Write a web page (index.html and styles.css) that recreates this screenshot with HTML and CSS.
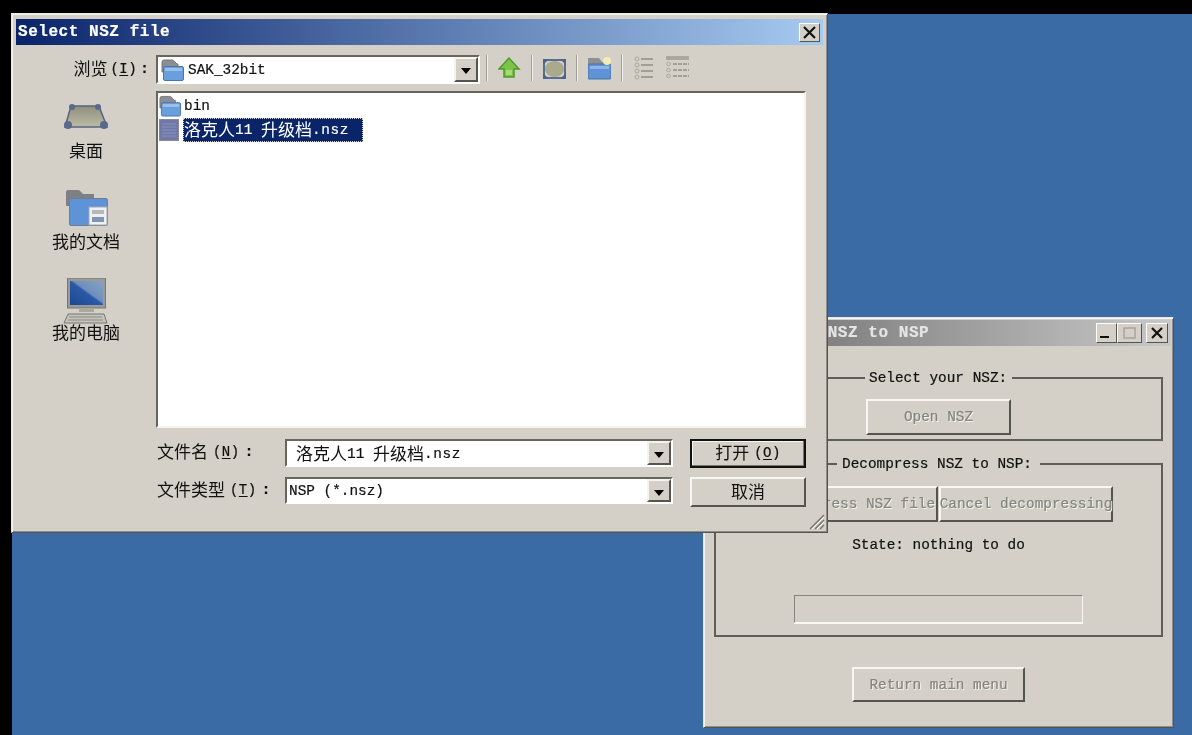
FILE: index.html
```html
<!DOCTYPE html>
<html lang="zh">
<head>
<meta charset="utf-8">
<title>Select NSZ file</title>
<link rel="stylesheet" href="styles.css">
</head>
<body>
<div class="screen">

  <section class="window app">
    <header class="titlebar inactive">
      <span class="app-title">Decompress NSZ to NSP</span>
      <div class="controls">
        <span class="ctl"><svg width="21" height="20" viewBox="0 0 21 20"><rect x="4" y="13" width="9" height="2" fill="#111"/></svg></span>
        <span class="ctl ctl-max"><svg width="25" height="20" viewBox="0 0 25 20"><rect x="7" y="5" width="11" height="10" fill="none" stroke="#a6a49c" stroke-width="1.5"/></svg></span>
        <span class="ctl ctl-close"><svg width="22" height="20" viewBox="0 0 22 20"><path d="M6 5l10 10M16 5L6 15" stroke="#111" stroke-width="2.2" fill="none"/></svg></span>
      </div>
    </header>
    <div class="app-body">
      <fieldset class="group group-open">
        <legend>Select your NSZ:</legend>
        <div class="btn-row"><button class="btn off open-btn" disabled>Open NSZ</button></div>
      </fieldset>
      <fieldset class="group group-dec">
        <legend>Decompress NSZ to NSP:</legend>
        <div class="btn-row">
          <button class="btn off dec-btn first" disabled>Decompress NSZ file</button>
          <button class="btn off dec-btn" disabled>Cancel decompressing</button>
        </div>
        <p class="state">State: nothing to do</p>
        <div class="progress"></div>
      </fieldset>
      <div class="btn-row return-row"><button class="btn off return-btn" disabled>Return main menu</button></div>
    </div>
  </section>

  <section class="window dialog">
    <header class="titlebar">
      <span class="dlg-title">Select NSZ file</span>
      <span class="ctl ctl-dlg"><svg width="21" height="19" viewBox="0 0 21 19"><path d="M5 4l11 11M16 4L5 15" stroke="#111" stroke-width="2.2" fill="none"/></svg></span>
    </header>
    <div class="dlg-grid">
      <div class="lookin-label"><span class="cn">浏览</span><span class="hot">(<u>I</u>)</span><b class="colon">:</b></div>
      <div class="toolbar">
        <div class="field combo look-combo">
          <svg class="folder-sm" width="24" height="22" viewBox="0 0 24 22"><use href="#folder"/></svg>
          <span class="mono">SAK_32bit</span>
          <span class="drop"></span>
        </div>
        <i class="sep"></i>
        <svg width="23" height="26" viewBox="0 0 23 26"><path d="M11 3L1 14h5v8h10v-8h5z" fill="#7dc24b" stroke="#4c9a2a" stroke-width="1.5"/><path d="M8 15v5h6v-5" fill="#a4dc74"/></svg>
        <i class="sep"></i>
        <svg width="23" height="26" viewBox="0 0 23 26"><rect x="0" y="4" width="23" height="20" fill="#5a6d92"/><rect x="2" y="6" width="19" height="16" fill="#d4d0c8"/><ellipse cx="11.500" cy="14" rx="9.500" ry="8" fill="#aaa98c"/><path d="M0 4h6L0 10zM23 4h-6l6 6zM0 24h6l-6-6zM23 24h-6l6-6z" fill="#4f6288"/></svg>
        <i class="sep"></i>
        <svg width="23" height="26" viewBox="0 0 23 26"><path d="M0 3h11l3 4h8v17H0z" fill="#8f9092"/><rect x="0" y="9" width="23" height="15" rx="1" fill="#5f92d6" stroke="#49719f"/><rect x="2" y="11" width="19" height="3" fill="#8db5e6"/><circle cx="19" cy="6" r="4" fill="#f2edb0"/></svg>
        <i class="sep"></i>
        <svg class="list-ic" width="23" height="26" viewBox="0 0 23 26"><g fill="none" stroke="#a9a79e"><circle cx="4" cy="4" r="2"/><circle cx="4" cy="10" r="2"/><circle cx="4" cy="16" r="2"/><circle cx="4" cy="22" r="2"/></g><path d="M8 4h12M8 10h12M8 16h12M8 22h12" stroke="#8f8d84" stroke-width="1.500"/></svg>
        <svg class="list-ic" width="23" height="26" viewBox="0 0 23 26"><rect x="0" y="1" width="23" height="4" fill="#a9a79e"/><g fill="none" stroke="#a9a79e"><circle cx="2.500" cy="9" r="1.800"/><circle cx="2.500" cy="15" r="1.800"/><circle cx="2.500" cy="21" r="1.800"/></g><path d="M7 9h16M7 15h16M7 21h16" stroke="#8f8d84" stroke-width="1.500" stroke-dasharray="4 1"/></svg>
      </div>

      <nav class="places">
        <div class="place">
          <svg width="46" height="46" viewBox="0 0 46 46"><defs><linearGradient id="desk" x1="0" y1="0" x2="0" y2="1"><stop offset="0" stop-color="#8f8f7c"/><stop offset="1" stop-color="#bdbba4"/></linearGradient></defs><path d="M8 10h28l8 21H2z" fill="url(#desk)" stroke="#55647f" stroke-width="1.500"/><circle cx="9" cy="11" r="3" fill="#58698c"/><circle cx="35" cy="11" r="3" fill="#58698c"/><circle cx="5" cy="29" r="4" fill="#58698c"/><circle cx="41" cy="29" r="4" fill="#58698c"/></svg>
          <span class="cn">桌面</span>
        </div>
        <div class="place">
          <svg width="46" height="46" viewBox="0 0 46 46"><path d="M3 5q0-2 2-2h10q2 0 3 2l2 2h11v12H3z" fill="#7e8083"/><rect x="6.500" y="11.500" width="38" height="27" rx="1.500" fill="#5e93d8" stroke="#6f7f92"/><rect x="26" y="20" width="18" height="18" fill="#eef0f2" stroke="#a4a8ad"/><rect x="29" y="23" width="12" height="4" fill="#b5b7ba"/><rect x="29" y="30" width="12" height="5" fill="#7f95b0"/></svg>
          <span class="cn">我的文档</span>
        </div>
        <div class="place">
          <svg width="46" height="46" viewBox="0 0 46 46"><defs><linearGradient id="scr" x1="0" y1="1" x2="1" y2="0"><stop offset="0" stop-color="#1d4690"/><stop offset=".5" stop-color="#2c5aa8"/><stop offset=".55" stop-color="#6d8fbd"/><stop offset="1" stop-color="#8aa0bf"/></linearGradient></defs><rect x="4.500" y="0" width="38" height="30" fill="#9a9a96" stroke="#777"/><rect x="7" y="3" width="33" height="24" fill="url(#scr)"/><rect x="16" y="30" width="15" height="4" fill="#a9a9a2"/><path d="M5 36h36l3 9H1z" fill="#c4c4bc" stroke="#77776f"/><path d="M6 39h33M5 42h35" stroke="#8c8c84"/></svg>
          <span class="cn">我的电脑</span>
        </div>
      </nav>

      <div class="filelist">
        <div class="row">
          <svg width="23" height="22" viewBox="0 0 24 22"><use href="#folder"/></svg>
          <span class="mono name-bin">bin</span>
        </div>
        <div class="row">
          <svg class="file-ic" width="20" height="22" viewBox="0 0 20 22"><rect x=".5" y=".5" width="19" height="21" fill="#6f78a8" stroke="#8a8a90"/><path d="M3 5h14M3 8h14M3 11h14M3 14h14M3 17h14" stroke="#8b92ba"/></svg>
          <span class="selected"><span class="cn">洛克人</span><span class="mono">11 </span><span class="cn">升级档</span><span class="mono ext">.nsz</span></span>
        </div>
      </div>

      <div class="bottom">
        <label class="bot-label"><span class="cn">文件名</span><span class="hot">(<u>N</u>)</span><b class="colon">:</b></label>
        <div class="field combo name-field">
          <span class="cn">洛克人</span><span class="mono">11 </span><span class="cn">升级档</span><span class="mono ext">.nsz</span>
          <span class="drop"></span>
        </div>
        <button class="btn default"><span class="cn">打开</span><span class="hot">(<u>O</u>)</span></button>
        <label class="bot-label"><span class="cn">文件类型</span><span class="hot">(<u>T</u>)</span><b class="colon">:</b></label>
        <div class="field combo type-field">
          <span class="mono">NSP (*.nsz)</span>
          <span class="drop"></span>
        </div>
        <button class="btn cancel-dlg"><span class="cn">取消</span></button>
      </div>
    </div>
    <svg class="grip" width="18" height="18" viewBox="0 0 18 18"><path d="M17 3L3 17M17 8l-9 9M17 13l-4 4" stroke="#77776f" stroke-width="1.500"/><path d="M17 5L5 17M17 10l-7 7" stroke="#fff"/></svg>
  </section>

  <svg class="defs" width="0" height="0"><defs>
    <g id="folder"><path d="M1 3q0-2 2-2h8q2 0 3 2l2 2h1v8H1z" fill="#8c8e92" stroke="#77797c"/><rect x="2.500" y="7.500" width="20" height="14" rx="1.500" fill="#6a9edd" stroke="#4d76a8"/><rect x="4" y="9" width="17" height="3" fill="#9cc0ea"/></g>
  </defs></svg>
</div>
</body>
</html>
```

FILE: styles.css
```css
* { box-sizing: border-box; }
html, body { margin: 0; height: 100%; background: #000; overflow: hidden; }
body { font: 14.4px "Liberation Mono", "Noto Sans CJK SC", monospace; color: #111; -webkit-text-stroke: 0.2px currentColor; }

.screen {
  position: relative;
  margin: 14px 0 0 12px;
  height: 721px;
  background: #3a6ba5;
  filter: blur(0.5px);
}
.defs { position: absolute; }

.cn { display: block; flex: none; padding-bottom: 4px; font: 17px/19px "Noto Sans CJK SC", sans-serif; white-space: nowrap; -webkit-text-stroke: 0; }
.mono { font: 14.4px/19px "Liberation Mono", monospace; }
.ext { letter-spacing: 0.6px; }
.hot { flex: none; margin-left: 5px; font: 14px/19px "Liberation Mono", monospace; letter-spacing: 0.4px; }
.colon { flex: none; margin-left: 5px; font: bold 15px/19px "Liberation Mono", monospace; }
u { text-underline-offset: 2px; }

.window {
  position: absolute;
  background: #d4d0c8;
  border: 1px solid;
  border-color: #e9e7e0 #55554f #55554f #e9e7e0;
  box-shadow: inset 1px 1px 0 #f4f3ee, inset -1px -1px 0 #8f8d86;
}
.dialog { left: -1px; top: -1px; width: 817px; height: 520px; padding: 5px 4px; }
.app { left: 691px; top: 303px; width: 471px; height: 411px; padding: 2px; }

.titlebar {
  display: flex;
  align-items: center;
  justify-content: space-between;
  height: 26px;
  color: #fff;
  font: bold 16px/26px "Liberation Mono", monospace;
  letter-spacing: 0.55px;
  background: linear-gradient(90deg, #0a246a, #a6caf0);
}
.dlg-title { padding-left: 2px; }
.inactive { background: linear-gradient(90deg, #6f6f6f 0%, #808080 25%, #c8c8c8 100%); color: #e4e4e4; }
.app-title { padding-left: 10px; }

.ctl {
  display: flex;
  width: 21px;
  height: 20px;
  background: #d4d0c8;
  border: 1px solid;
  border-color: #fff #55554f #55554f #fff;
}
.ctl svg { margin: -1px; flex: none; }
.controls { display: flex; padding-right: 3px; }
.ctl-max { width: 25px; margin-right: 4px; }
.ctl-close { width: 22px; }
.ctl-dlg { margin-right: 3px; height: 19px; }

.dlg-grid {
  display: grid;
  grid-template-columns: 140px 650px;
  grid-template-rows: 30px 337px auto;
  row-gap: 6px;
  margin-top: 10px;
}
.lookin-label {
  display: flex;
  justify-content: flex-end;
  align-items: center;
  height: 29px;
  padding-right: 7px;
}
.lookin-label .hot { margin-left: 3px; }
.lookin-label .colon { margin-left: 3px; }

.toolbar { display: flex; align-items: flex-start; gap: 10px; }
.toolbar .look-combo { margin-right: -4px; }
.sep { width: 2px; height: 26px; background: #a09e96; border-right: 1px solid #f2f1ec; }

.field {
  position: relative;
  display: flex;
  align-items: center;
  background: #fff;
  border: 2px solid;
  border-color: #66665f #fff #fff #66665f;
  white-space: pre;
}
.field .mono { padding-top: 2px; }
.combo { padding-right: 26px; }
.look-combo { width: 324px; height: 29px; padding-left: 3px; gap: 3px; }
.drop {
  position: absolute;
  right: 0;
  top: 0;
  bottom: 0;
  width: 24px;
  background: #d4d0c8;
  border: 2px solid;
  border-color: #f4f3ee #55554f #55554f #f4f3ee;
}
.drop::after {
  content: "";
  position: absolute;
  left: 5px;
  top: 9px;
  border: 5px solid transparent;
  border-top: 6px solid #000;
  border-bottom: 0;
}

.places { display: flex; flex-direction: column; align-items: center; gap: 24px; padding-top: 5px; }
.place { display: flex; flex-direction: column; align-items: center; }
.place svg { display: block; margin-bottom: -2px; }

.filelist {
  background: #fff;
  border: 2px solid;
  border-color: #66665f #f4f3ee #f4f3ee #66665f;
  padding-top: 1px;
  padding-left: 1px;
}
.row { display: flex; align-items: center; height: 24px; }
.file-ic { margin-right: 4px; }
.name-bin { margin-left: 2px; }
.selected {
  display: flex;
  align-items: center;
  width: 180px;
  height: 24px;
  padding-left: 1px;
  color: #fff;
  white-space: pre;
  background: #0a246a;
  outline: 1px dotted #d4d0c8;
  outline-offset: -1px;
}

.bottom {
  grid-column: 2;
  display: grid;
  grid-template-columns: 111px 388px 116px;
  grid-template-rows: 29px 30px;
  column-gap: 17px;
  row-gap: 9px;
  margin-top: 5px;
  padding-left: 1px;
}
.bot-label { display: flex; align-items: center; height: 26px; white-space: nowrap; }
.name-field { height: 28px; padding-left: 9px; }
.name-field .cn { padding-bottom: 2px; }
.type-field { height: 27px; padding-left: 2px; }

.btn {
  display: flex;
  align-items: center;
  justify-content: center;
  padding: 0;
  color: #111;
  background: #d4d0c8;
  border: 2px solid;
  border-color: #f8f7f3 #55554f #55554f #f8f7f3;
  white-space: nowrap;
  font: 14.4px/19px "Liberation Mono", monospace;
}
.default { border-color: #111; box-shadow: inset -1px -1px 0 #77776f, inset 1px 1px 0 #f8f7f3; }
.off { color: #85857e; text-shadow: 1px 1px 0 #f4f3ee; }

.app-body { padding: 0 8px 0 8px; }
.group {
  margin: 0;
  padding: 0;
  min-width: 0;
  border: 2px solid #5f5f59;
}
.group legend {
  height: 20px;
  line-height: 20px;
  white-space: nowrap;
}
.group-open { margin-top: 22px; }
.group-open legend { margin-left: 149px; padding: 0 5px 0 4px; }
.group-dec { margin-top: 13px; height: 183px; }
.group-dec legend { margin-left: 121px; padding: 0 8px 0 5px; }
.btn-row { display: flex; justify-content: center; gap: 1px; }
.group-open .btn-row { padding: 11px 0 4px; }
.group-dec .btn-row { padding-top: 12px; }
.open-btn { width: 145px; height: 36px; }
.dec-btn { width: 174px; height: 36px; }
.first { padding-left: 4px; }
.state { margin: 14px 0 0; height: 19px; text-align: center; line-height: 19px; }
.progress {
  width: 289px;
  height: 28px;
  margin: 40px auto 0;
  border: 1px solid;
  border-color: #85857e #f8f7f3 #f8f7f3 #85857e;
  box-shadow: 0 1px 0 #f8f7f3;
}
.return-row { padding-top: 30px; }
.return-btn { width: 173px; height: 35px; padding-top: 2px; }
.grip { position: absolute; right: 2px; bottom: 2px; }
```
